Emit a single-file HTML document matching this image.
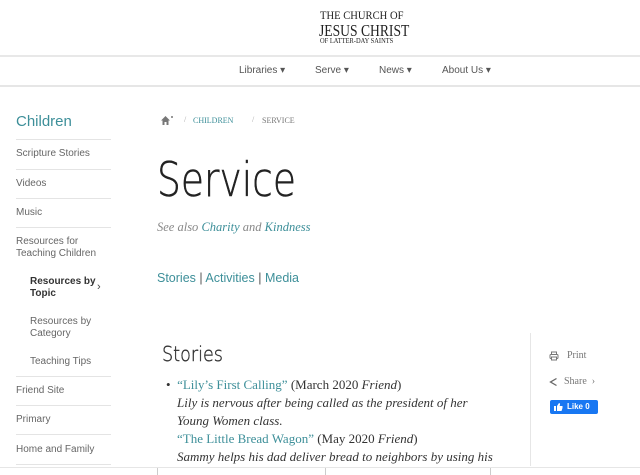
<!DOCTYPE html>
<html><head><meta charset="utf-8"><style>
*{margin:0;padding:0;box-sizing:border-box}
body{width:640px;height:475px;overflow:hidden;background:#fff;font-family:"Liberation Sans",sans-serif;position:relative;color:#333}
.a{position:absolute;white-space:nowrap}
.serif{font-family:"Liberation Serif",serif}
.t{color:#3d8f99}
.nav{font-size:10px;color:#555}
.sb{font-size:10px;color:#666;left:16px}
.ln{position:absolute;left:16px;width:95px;height:1px;background:#e4e4e4}
.lt{font-family:"DejaVu Sans","Liberation Sans",sans-serif;font-weight:200}
</style></head><body>
<div class="a serif" style="left:320px;top:10px;font-size:11.5px;color:#222;transform:scaleX(0.92);transform-origin:left">THE CHURCH OF</div>
<div class="a serif" style="left:319px;top:21px;font-size:17px;color:#222;transform:scaleX(0.8);transform-origin:left">JESUS CHRIST</div>
<div class="a serif" style="left:320px;top:37px;font-size:7px;color:#222;transform:scaleX(0.92);transform-origin:left">OF LATTER-DAY SAINTS</div>
<div style="position:absolute;left:0;top:55px;width:640px;height:2px;background:#e8e8e8"></div>
<div style="position:absolute;left:0;top:85px;width:640px;height:2px;background:#e6e6e6"></div>
<div class="a nav" style="left:239px;top:65px">Libraries ▾</div>
<div class="a nav" style="left:315px;top:65px">Serve ▾</div>
<div class="a nav" style="left:379px;top:65px">News ▾</div>
<div class="a nav" style="left:442px;top:65px">About Us ▾</div>

<div class="a t" style="left:16px;top:113px;font-size:15px">Children</div>
<div class="ln" style="top:139px"></div>
<div class="a sb" style="top:148px">Scripture Stories</div>
<div class="ln" style="top:169px"></div>
<div class="a sb" style="top:178px">Videos</div>
<div class="ln" style="top:198px"></div>
<div class="a sb" style="top:207px">Music</div>
<div class="ln" style="top:227px"></div>
<div class="a sb" style="top:236px;line-height:12px">Resources for<br>Teaching Children</div>
<div class="a" style="left:30px;top:276px;font-size:10px;line-height:12px;color:#333;font-weight:bold">Resources by<br>Topic</div>
<div class="a" style="left:97px;top:281px;font-size:11px;color:#444">›</div>
<div class="a sb" style="left:30px;top:316px;line-height:12px">Resources by<br>Category</div>
<div class="a sb" style="left:30px;top:356px">Teaching Tips</div>
<div class="ln" style="top:376px"></div>
<div class="a sb" style="top:385px">Friend Site</div>
<div class="ln" style="top:405px"></div>
<div class="a sb" style="top:414px">Primary</div>
<div class="ln" style="top:434px"></div>
<div class="a sb" style="top:444px">Home and Family</div>
<div class="ln" style="top:464px"></div>

<svg class="a" style="left:160px;top:115px" width="14" height="11" viewBox="0 0 14 11"><path d="M1 5.5L5.5 1L10 5.5H8.5V10H6.5V7H4.5V10H2.5V5.5Z" fill="#777"/><circle cx="12" cy="2" r="1" fill="#777"/></svg>
<div class="a serif" style="left:184px;top:115px;font-size:8px;color:#aaa">/</div>
<div class="a serif t" style="left:193px;top:116px;font-size:8px">CHILDREN</div>
<div class="a serif" style="left:252px;top:115px;font-size:8px;color:#aaa">/</div>
<div class="a serif" style="left:262px;top:116px;font-size:8px;color:#777">SERVICE</div>

<div class="a lt" style="left:157px;top:153px;font-size:47px;color:#222;transform:scaleX(0.8);transform-origin:left;-webkit-text-stroke:0.5px #222">Service</div>
<div class="a serif" style="left:157px;top:220px;font-size:12.5px;font-style:italic;color:#888">See also <span class="t">Charity</span> and <span class="t">Kindness</span></div>
<div class="a" style="left:157px;top:271px;font-size:12.5px;color:#555"><span class="t">Stories</span> | <span class="t">Activities</span> | <span class="t">Media</span></div>

<div class="a lt" style="left:162px;top:342px;font-size:20px;color:#333;transform:scaleX(0.88);transform-origin:left;-webkit-text-stroke:0.4px #333">Stories</div>
<div class="a serif" style="left:166px;top:376px;font-size:13px;line-height:18px;color:#333">•&nbsp;&nbsp;<span class="t">“Lily’s First Calling”</span> (March 2020 <i>Friend</i>)</div>
<div class="a serif" style="left:177px;top:394px;font-size:13px;line-height:18px;color:#333;font-style:italic">Lily is nervous after being called as the president of her<br>Young Women class.</div>
<div class="a serif" style="left:177px;top:430px;font-size:13px;line-height:18px;color:#333"><span class="t">“The Little Bread Wagon”</span> (May 2020 <i>Friend</i>)</div>
<div class="a serif" style="left:177px;top:448px;font-size:13px;line-height:18px;color:#333;font-style:italic">Sammy helps his dad deliver bread to neighbors by using his</div>

<div style="position:absolute;left:530px;top:333px;width:1px;height:133px;background:#e6e6e6"></div>
<svg class="a" style="left:549px;top:351px" width="10" height="10" viewBox="0 0 10 10"><rect x="2.5" y="1" width="5" height="2.5" fill="none" stroke="#777"/><rect x="1" y="3.5" width="8" height="4" rx="1" fill="none" stroke="#777"/><rect x="2.5" y="6" width="5" height="3" fill="#fff" stroke="#777"/></svg>
<div class="a serif" style="left:567px;top:350px;font-size:10px;color:#777">Print</div>
<svg class="a" style="left:549px;top:377px" width="9" height="10" viewBox="0 0 9 10"><path d="M7.5 1.5L1.5 5L7.5 8.5" fill="none" stroke="#666" stroke-width="1.3"/></svg>
<div class="a serif" style="left:564px;top:376px;font-size:10px;color:#777">Share&nbsp;&nbsp;›</div>
<div class="a" style="left:550px;top:400px;width:48px;height:14px;background:#1877f2;border-radius:2px;color:#fff;font-size:8px;font-weight:bold;line-height:14px;padding-left:17px">Like 0</div>
<svg class="a" style="left:554px;top:403px" width="9" height="8" viewBox="0 0 9 8"><path d="M0 3H2V8H0ZM3 3L5 0C6 0 6 1 6 2L5.5 3H8.5V5L7.5 8H3Z" fill="#fff"/></svg>

<div style="position:absolute;left:0;top:467px;width:640px;height:1px;background:#e6e6e6"></div>
<div style="position:absolute;left:157px;top:468px;width:1px;height:7px;background:#ccc"></div>
<div style="position:absolute;left:325px;top:468px;width:1px;height:7px;background:#ccc"></div>
<div style="position:absolute;left:490px;top:468px;width:1px;height:7px;background:#ccc"></div>
</body></html>
